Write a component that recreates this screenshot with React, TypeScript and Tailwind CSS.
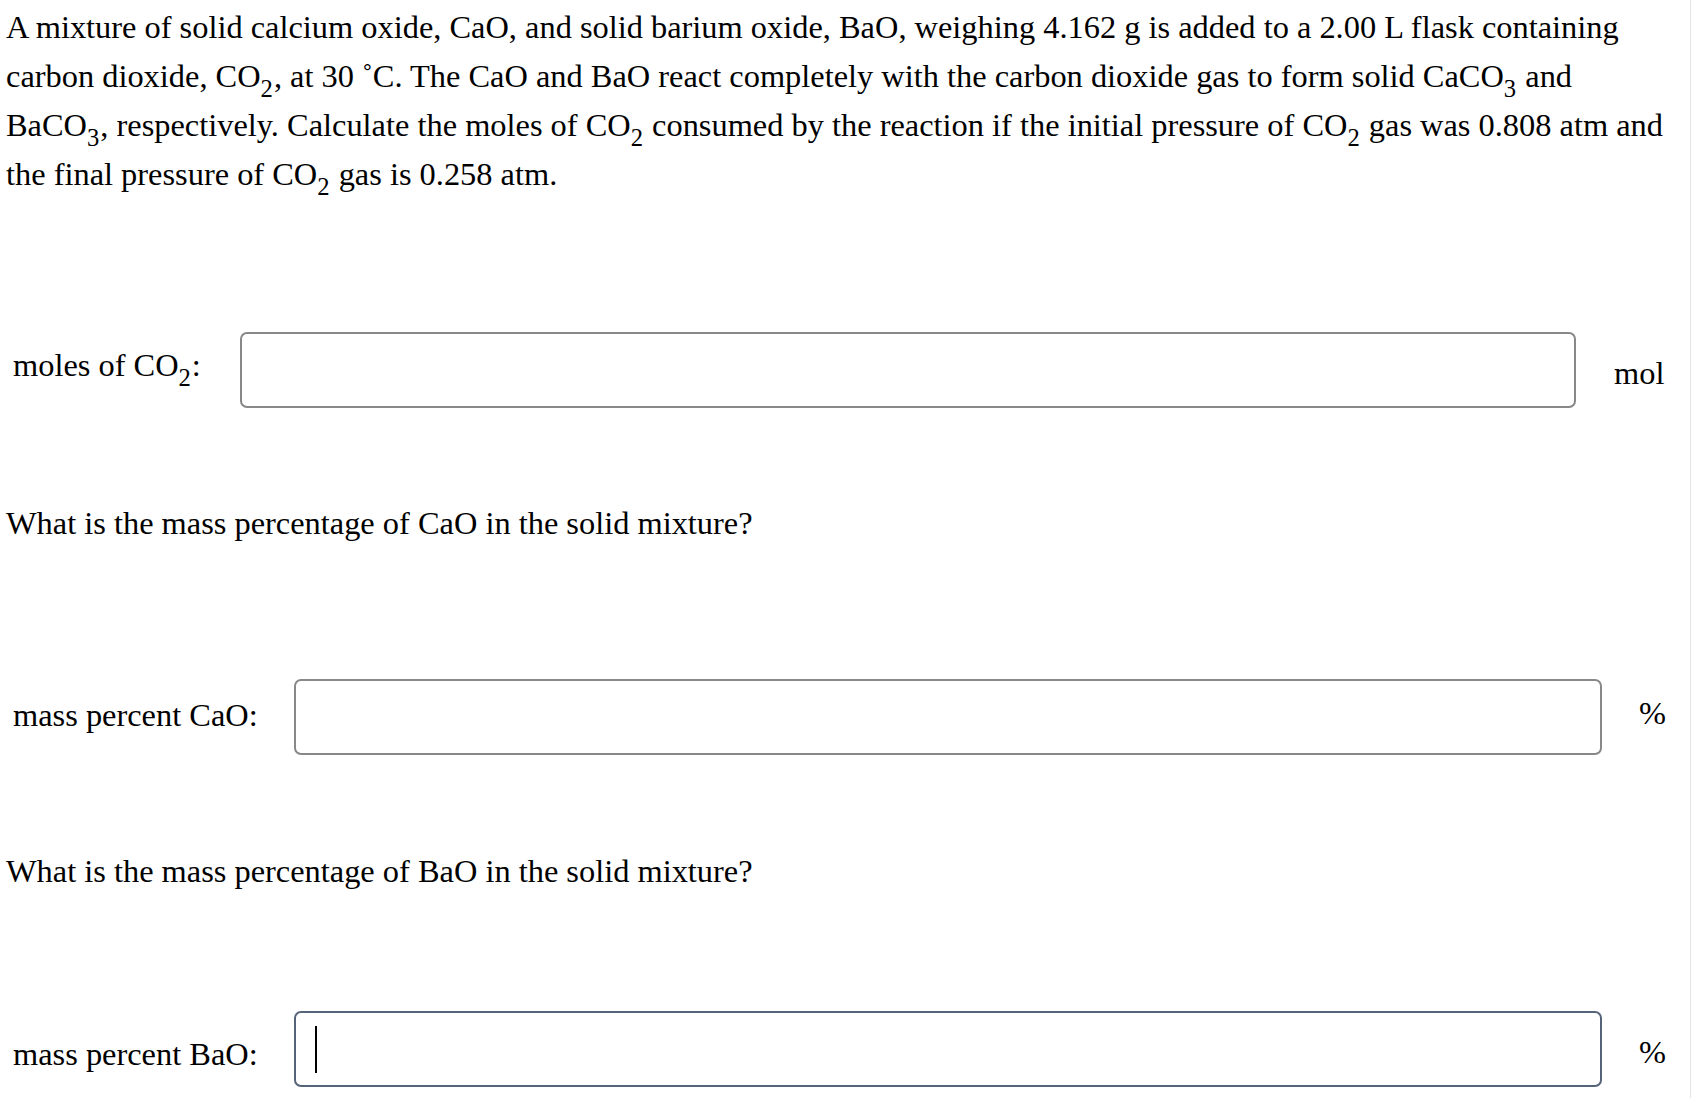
import type { ReactNode } from 'react';

function Sub({ children }: { readonly children: ReactNode }): ReactNode {
  return (
    <sub className="relative bottom-[-0.4em] mr-[1px] align-baseline text-[0.76em] leading-[0]">
      {children}
    </sub>
  );
}

interface AnswerRowProps {
  readonly label: ReactNode;
  readonly labelWidth: string;
  readonly labelOffset: string;
  readonly boxWidth: string;
  readonly unit: string;
  readonly unitGap: string;
  readonly unitOffset: string;
  readonly focused?: boolean;
}

function AnswerRow({
  label,
  labelWidth,
  labelOffset,
  boxWidth,
  unit,
  unitGap,
  unitOffset,
  focused = false,
}: AnswerRowProps): ReactNode {
  return (
    <div className="flex items-start pl-[13px]">
      <div className={`${labelWidth} ${labelOffset} shrink-0 whitespace-nowrap`}>{label}</div>
      <div
        className={
          focused
            ? `${boxWidth} flex h-[76px] shrink-0 items-center rounded-[7px] border-2 border-[#56647a] pl-[19px]`
            : `${boxWidth} h-[76px] shrink-0 rounded-[7px] border-2 border-[#888888]`
        }
      >
        {focused ? <div className="h-[47px] w-[2px] bg-black" /> : null}
      </div>
      <div className={`${unitGap} ${unitOffset} shrink-0 whitespace-nowrap`}>{unit}</div>
    </div>
  );
}

export default function App(): ReactNode {
  return (
    <div className="flex h-[1098px] w-[1692px] overflow-hidden bg-white font-['Liberation_Serif',serif] text-[32.4px] leading-[49px] text-black">
      <div className="h-full w-[1690px] shrink-0">
        <p className="whitespace-nowrap pl-[6px] pt-[3px]">
          A mixture of solid calcium oxide, CaO, and solid barium oxide, BaO, weighing 4.162 g is added to a 2.00 L flask containing
          <br />
          carbon dioxide, CO<Sub>2</Sub>, at 30 ˚C. The CaO and BaO react completely with the carbon dioxide gas to form solid CaCO<Sub>3</Sub> and
          <br />
          BaCO<Sub>3</Sub>, respectively. Calculate the moles of CO<Sub>2</Sub> consumed by the reaction if the initial pressure of CO<Sub>2</Sub> gas was 0.808 atm and
          <br />
          the final pressure of CO<Sub>2</Sub> gas is 0.258 atm.
        </p>

        <div className="mt-[133px]">
          <AnswerRow
            label={
              <>
                moles of CO<Sub>2</Sub>:
              </>
            }
            labelWidth="w-[227px]"
            labelOffset="mt-[9px]"
            boxWidth="w-[1336px]"
            unit="mol"
            unitGap="ml-[38px]"
            unitOffset="mt-[17px]"
          />
        </div>

        <p className="mt-[91px] pl-[6px]">What is the mass percentage of CaO in the solid mixture?</p>

        <div className="mt-[131px]">
          <AnswerRow
            label="mass percent CaO:"
            labelWidth="w-[281px]"
            labelOffset="mt-[12px]"
            boxWidth="w-[1308px]"
            unit="%"
            unitGap="ml-[37px]"
            unitOffset="mt-[10px]"
          />
        </div>

        <p className="mt-[92px] pl-[6px]">What is the mass percentage of BaO in the solid mixture?</p>

        <div className="mt-[115px]">
          <AnswerRow
            label="mass percent BaO:"
            labelWidth="w-[281px]"
            labelOffset="mt-[19px]"
            boxWidth="w-[1308px]"
            unit="%"
            unitGap="ml-[37px]"
            unitOffset="mt-[17px]"
            focused
          />
        </div>
      </div>
      <div className="h-full w-[1px] shrink-0 bg-[#e4e4e4]" />
    </div>
  );
}
